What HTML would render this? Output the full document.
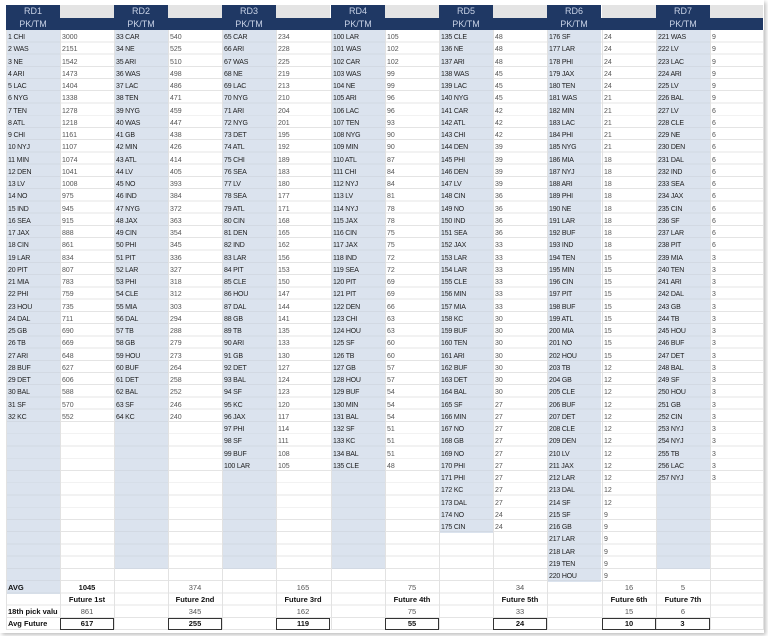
<!DOCTYPE html>
<html><head><meta charset="utf-8">
<style>
*{margin:0;padding:0;box-sizing:border-box}
html,body{width:768px;height:636px;overflow:hidden;background:#fff;font-family:"Liberation Sans",Arial,sans-serif}
#sheet{position:absolute;left:0;top:0;width:764px;height:633px;background:#fff;box-shadow:2px 2px 4px rgba(0,0,0,0.25);overflow:hidden}
#grid{position:absolute;left:6px;top:30px;width:757px;height:601px;
background-image:repeating-linear-gradient(to bottom,transparent 0,transparent 11.25px,#e4e4e4 11.25px,#e4e4e4 12.25px)}
.blue{position:absolute;width:54px;background-color:#dbe3ee;
background-image:repeating-linear-gradient(to bottom,transparent 0,transparent 11.25px,#d2d9e3 11.25px,#d2d9e3 12.25px)}
.vl{position:absolute;top:30px;width:1px;height:600px;background:#e2e2e2}
.col{position:absolute;top:32px;width:54px;font-size:7px;line-height:12.25px;padding-left:2px;white-space:nowrap;overflow:hidden}
.lab{color:#1e1e1e;letter-spacing:-0.2px}
.val{color:#555}
.h1{position:absolute;top:5px;height:13px;width:54px;background:#1f3864;color:#c8d2e6;font-size:9px;line-height:13px;text-align:center}
.h1g{position:absolute;top:5px;height:13px;width:54px;background:#e4e4e4}
#h2{position:absolute;left:6px;top:18px;width:757px;height:12px;background:#1f3864}
.h2t{position:absolute;top:18px;height:12px;width:54px;color:#c8d2e6;font-size:9px;line-height:12px;text-align:center}
.b{position:absolute;font-size:7.5px;line-height:12px;height:12px;width:54px;text-align:center;color:#555}
.bb{font-weight:bold;color:#111}
.box{border:1px solid #333;line-height:10px}
</style></head><body>
<div id="sheet">
<div id="grid"></div>

<div class="blue" style="left:6px;top:30px;height:564px"></div>
<div class="blue" style="left:114px;top:30px;height:539px"></div>
<div class="blue" style="left:222px;top:30px;height:539px"></div>
<div class="blue" style="left:331px;top:30px;height:539px"></div>
<div class="blue" style="left:439px;top:30px;height:503px"></div>
<div class="blue" style="left:547px;top:30px;height:552px"></div>
<div class="blue" style="left:656px;top:30px;height:539px"></div>

<div class="vl" style="left:6px"></div><div class="vl" style="left:60px"></div>
<div class="vl" style="left:114px"></div><div class="vl" style="left:168px"></div>
<div class="vl" style="left:222px"></div><div class="vl" style="left:276px"></div>
<div class="vl" style="left:331px"></div><div class="vl" style="left:385px"></div>
<div class="vl" style="left:439px"></div><div class="vl" style="left:493px"></div>
<div class="vl" style="left:547px"></div><div class="vl" style="left:602px"></div>
<div class="vl" style="left:656px"></div><div class="vl" style="left:710px"></div>
<div class="vl" style="left:763px"></div>

<div class="h1" style="left:6px">RD1</div><div class="h1g" style="left:60px"></div>
<div class="h1" style="left:114px">RD2</div><div class="h1g" style="left:168px"></div>
<div class="h1" style="left:222px">RD3</div><div class="h1g" style="left:276px"></div>
<div class="h1" style="left:331px">RD4</div><div class="h1g" style="left:385px"></div>
<div class="h1" style="left:439px">RD5</div><div class="h1g" style="left:493px"></div>
<div class="h1" style="left:547px">RD6</div><div class="h1g" style="left:602px"></div>
<div class="h1" style="left:656px">RD7</div><div class="h1g" style="left:710px;width:53px"></div>
<div id="h2"></div>
<div class="h2t" style="left:6px">PK/TM</div>
<div class="h2t" style="left:114px">PK/TM</div>
<div class="h2t" style="left:222px">PK/TM</div>
<div class="h2t" style="left:331px">PK/TM</div>
<div class="h2t" style="left:439px">PK/TM</div>
<div class="h2t" style="left:547px">PK/TM</div>
<div class="h2t" style="left:656px">PK/TM</div>

<div class="col lab" style="left:6px">1 CHI<br>2 WAS<br>3 NE<br>4 ARI<br>5 LAC<br>6 NYG<br>7 TEN<br>8 ATL<br>9 CHI<br>10 NYJ<br>11 MIN<br>12 DEN<br>13 LV<br>14 NO<br>15 IND<br>16 SEA<br>17 JAX<br>18 CIN<br>19 LAR<br>20 PIT<br>21 MIA<br>22 PHI<br>23 HOU<br>24 DAL<br>25 GB<br>26 TB<br>27 ARI<br>28 BUF<br>29 DET<br>30 BAL<br>31 SF<br>32 KC</div>
<div class="col val" style="left:60px">3000<br>2151<br>1542<br>1473<br>1404<br>1338<br>1278<br>1218<br>1161<br>1107<br>1074<br>1041<br>1008<br>975<br>945<br>915<br>888<br>861<br>834<br>807<br>783<br>759<br>735<br>711<br>690<br>669<br>648<br>627<br>606<br>588<br>570<br>552</div>

<div class="col lab" style="left:114px">33 CAR<br>34 NE<br>35 ARI<br>36 WAS<br>37 LAC<br>38 TEN<br>39 NYG<br>40 WAS<br>41 GB<br>42 MIN<br>43 ATL<br>44 LV<br>45 NO<br>46 IND<br>47 NYG<br>48 JAX<br>49 CIN<br>50 PHI<br>51 PIT<br>52 LAR<br>53 PHI<br>54 CLE<br>55 MIA<br>56 DAL<br>57 TB<br>58 GB<br>59 HOU<br>60 BUF<br>61 DET<br>62 BAL<br>63 SF<br>64 KC</div>
<div class="col val" style="left:168px">540<br>525<br>510<br>498<br>486<br>471<br>459<br>447<br>438<br>426<br>414<br>405<br>393<br>384<br>372<br>363<br>354<br>345<br>336<br>327<br>318<br>312<br>303<br>294<br>288<br>279<br>273<br>264<br>258<br>252<br>246<br>240</div>

<div class="col lab" style="left:222px">65 CAR<br>66 ARI<br>67 WAS<br>68 NE<br>69 LAC<br>70 NYG<br>71 ARI<br>72 NYG<br>73 DET<br>74 ATL<br>75 CHI<br>76 SEA<br>77 LV<br>78 SEA<br>79 ATL<br>80 CIN<br>81 DEN<br>82 IND<br>83 LAR<br>84 PIT<br>85 CLE<br>86 HOU<br>87 DAL<br>88 GB<br>89 TB<br>90 ARI<br>91 GB<br>92 DET<br>93 BAL<br>94 SF<br>95 KC<br>96 JAX<br>97 PHI<br>98 SF<br>99 BUF<br>100 LAR</div>
<div class="col val" style="left:276px">234<br>228<br>225<br>219<br>213<br>210<br>204<br>201<br>195<br>192<br>189<br>183<br>180<br>177<br>171<br>168<br>165<br>162<br>156<br>153<br>150<br>147<br>144<br>141<br>135<br>133<br>130<br>127<br>124<br>123<br>120<br>117<br>114<br>111<br>108<br>105</div>

<div class="col lab" style="left:331px">100 LAR<br>101 WAS<br>102 CAR<br>103 WAS<br>104 NE<br>105 ARI<br>106 LAC<br>107 TEN<br>108 NYG<br>109 MIN<br>110 ATL<br>111 CHI<br>112 NYJ<br>113 LV<br>114 NYJ<br>115 JAX<br>116 CIN<br>117 JAX<br>118 IND<br>119 SEA<br>120 PIT<br>121 PIT<br>122 DEN<br>123 CHI<br>124 HOU<br>125 SF<br>126 TB<br>127 GB<br>128 HOU<br>129 BUF<br>130 MIN<br>131 BAL<br>132 SF<br>133 KC<br>134 BAL<br>135 CLE</div>
<div class="col val" style="left:385px">105<br>102<br>102<br>99<br>99<br>96<br>96<br>93<br>90<br>90<br>87<br>84<br>84<br>81<br>78<br>78<br>75<br>75<br>72<br>72<br>69<br>69<br>66<br>63<br>63<br>60<br>60<br>57<br>57<br>54<br>54<br>54<br>51<br>51<br>51<br>48</div>

<div class="col lab" style="left:439px">135 CLE<br>136 NE<br>137 ARI<br>138 WAS<br>139 LAC<br>140 NYG<br>141 CAR<br>142 ATL<br>143 CHI<br>144 DEN<br>145 PHI<br>146 DEN<br>147 LV<br>148 CIN<br>149 NO<br>150 IND<br>151 SEA<br>152 JAX<br>153 LAR<br>154 LAR<br>155 CLE<br>156 MIN<br>157 MIA<br>158 KC<br>159 BUF<br>160 TEN<br>161 ARI<br>162 BUF<br>163 DET<br>164 BAL<br>165 SF<br>166 MIN<br>167 NO<br>168 GB<br>169 NO<br>170 PHI<br>171 PHI<br>172 KC<br>173 DAL<br>174 NO<br>175 CIN</div>
<div class="col val" style="left:493px">48<br>48<br>48<br>45<br>45<br>45<br>42<br>42<br>42<br>39<br>39<br>39<br>39<br>36<br>36<br>36<br>36<br>33<br>33<br>33<br>33<br>33<br>33<br>30<br>30<br>30<br>30<br>30<br>30<br>30<br>27<br>27<br>27<br>27<br>27<br>27<br>27<br>27<br>27<br>24<br>24</div>

<div class="col lab" style="left:547px">176 SF<br>177 LAR<br>178 PHI<br>179 JAX<br>180 TEN<br>181 WAS<br>182 MIN<br>183 LAC<br>184 PHI<br>185 NYG<br>186 MIA<br>187 NYJ<br>188 ARI<br>189 PHI<br>190 NE<br>191 LAR<br>192 BUF<br>193 IND<br>194 TEN<br>195 MIN<br>196 CIN<br>197 PIT<br>198 BUF<br>199 ATL<br>200 MIA<br>201 NO<br>202 HOU<br>203 TB<br>204 GB<br>205 CLE<br>206 BUF<br>207 DET<br>208 CLE<br>209 DEN<br>210 LV<br>211 JAX<br>212 LAR<br>213 DAL<br>214 SF<br>215 SF<br>216 GB<br>217 LAR<br>218 LAR<br>219 TEN<br>220 HOU</div>
<div class="col val" style="left:602px">24<br>24<br>24<br>24<br>24<br>21<br>21<br>21<br>21<br>21<br>18<br>18<br>18<br>18<br>18<br>18<br>18<br>18<br>15<br>15<br>15<br>15<br>15<br>15<br>15<br>15<br>15<br>12<br>12<br>12<br>12<br>12<br>12<br>12<br>12<br>12<br>12<br>12<br>12<br>9<br>9<br>9<br>9<br>9<br>9</div>

<div class="col lab" style="left:656px">221 WAS<br>222 LV<br>223 LAC<br>224 ARI<br>225 LV<br>226 BAL<br>227 LV<br>228 CLE<br>229 NE<br>230 DEN<br>231 DAL<br>232 IND<br>233 SEA<br>234 JAX<br>235 CIN<br>236 SF<br>237 LAR<br>238 PIT<br>239 MIA<br>240 TEN<br>241 ARI<br>242 DAL<br>243 GB<br>244 TB<br>245 HOU<br>246 BUF<br>247 DET<br>248 BAL<br>249 SF<br>250 HOU<br>251 GB<br>252 CIN<br>253 NYJ<br>254 NYJ<br>255 TB<br>256 LAC<br>257 NYJ</div>
<div class="col val" style="left:710px">9<br>9<br>9<br>9<br>9<br>9<br>6<br>6<br>6<br>6<br>6<br>6<br>6<br>6<br>6<br>6<br>6<br>6<br>3<br>3<br>3<br>3<br>3<br>3<br>3<br>3<br>3<br>3<br>3<br>3<br>3<br>3<br>3<br>3<br>3<br>3<br>3</div>

<div class="b bb" style="left:8px;top:582px;text-align:left">AVG</div>
<div class="b bb" style="left:60px;top:582px">1045</div>
<div class="b" style="left:168px;top:582px">374</div>
<div class="b" style="left:276px;top:582px">165</div>
<div class="b" style="left:385px;top:582px">75</div>
<div class="b" style="left:493px;top:582px">34</div>
<div class="b" style="left:602px;top:582px">16</div>
<div class="b" style="left:656px;top:582px">5</div>

<div class="b bb" style="left:60px;top:594px">Future 1st</div>
<div class="b bb" style="left:168px;top:594px">Future 2nd</div>
<div class="b bb" style="left:276px;top:594px">Future 3rd</div>
<div class="b bb" style="left:385px;top:594px">Future 4th</div>
<div class="b bb" style="left:493px;top:594px">Future 5th</div>
<div class="b bb" style="left:602px;top:594px">Future 6th</div>
<div class="b bb" style="left:656px;top:594px">Future 7th</div>

<div class="b bb" style="left:8px;top:606px;width:52px;text-align:left;overflow:hidden;white-space:nowrap">18th pick valu</div>
<div class="b" style="left:60px;top:606px">861</div>
<div class="b" style="left:168px;top:606px">345</div>
<div class="b" style="left:276px;top:606px">162</div>
<div class="b" style="left:385px;top:606px">75</div>
<div class="b" style="left:493px;top:606px">33</div>
<div class="b" style="left:602px;top:606px">15</div>
<div class="b" style="left:656px;top:606px">6</div>

<div class="b bb" style="left:8px;top:618px;text-align:left">Avg Future</div>
<div class="b bb box" style="left:60px;top:618px">617</div>
<div class="b bb box" style="left:168px;top:618px">255</div>
<div class="b bb box" style="left:276px;top:618px">119</div>
<div class="b bb box" style="left:385px;top:618px">55</div>
<div class="b bb box" style="left:493px;top:618px">24</div>
<div class="b bb box" style="left:602px;top:618px">10</div>
<div class="b bb box" style="left:655px;top:618px;width:55px">3</div>
</div>
</body></html>
